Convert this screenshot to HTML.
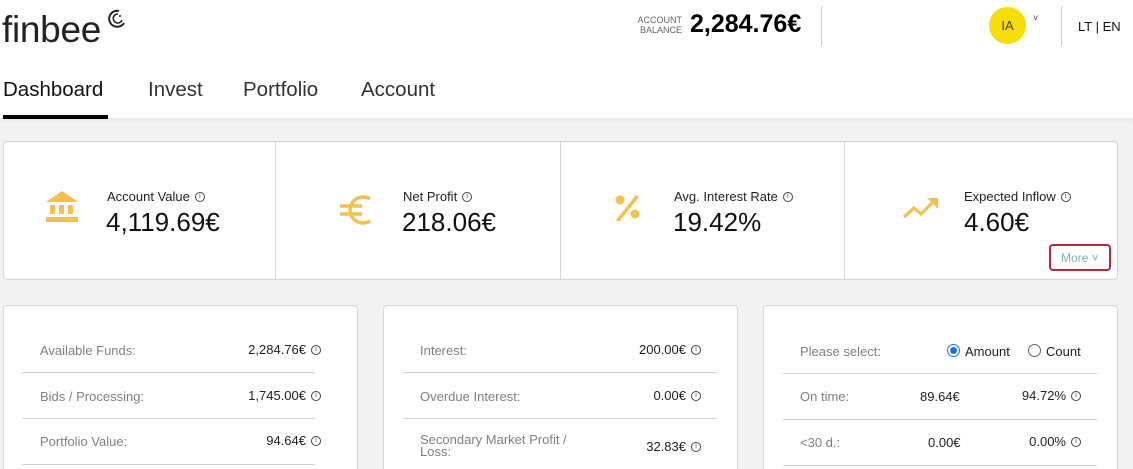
<!DOCTYPE html>
<html><head><meta charset="utf-8"><style>
*{margin:0;padding:0;box-sizing:border-box}
html,body{width:1133px;height:469px;overflow:hidden}
body{background:#f2f2f2;font-family:"Liberation Sans",sans-serif;position:relative;color:#111}
.a{position:absolute;white-space:nowrap}
.hdr{position:absolute;left:0;top:0;width:1133px;height:118px;background:#fff;box-shadow:0 2px 4px rgba(0,0,0,.06)}
.card{position:absolute;background:#fff;border:1px solid #d6d6d6;border-radius:4px}
.lbl{font-size:13px;color:#808080}
.val{font-size:13px;color:#222}
.line{position:absolute;height:1px;background:#d2d2d2}
.i{display:inline-block;width:10px;height:10px;border:1px solid #444;border-radius:50%;font-size:7px;line-height:8px;text-align:center;vertical-align:3px;margin-left:5px;color:#444}
.sl{font-size:13px;color:#222}
.big{font-size:26px;color:#111}
</style></head><body>
<div class="hdr"></div>
<div class="a" style="left:2px;top:9px;font-size:37px;color:#222;letter-spacing:-0.3px">finbee</div>
<svg class="a" style="left:105px;top:8px" width="22" height="22" viewBox="0 0 22 22"><path d="M14 3 A8 8 0 1 0 19 15" fill="none" stroke="#222" stroke-width="2"/><path d="M13 6 A4.5 4.5 0 1 0 17 12" fill="none" stroke="#222" stroke-width="1.6"/><circle cx="15" cy="8" r="1" fill="#222"/></svg>
<div class="a" style="left:3px;top:78px;font-size:20.5px;color:#111">Dashboard</div>
<div class="a" style="left:148px;top:78px;font-size:20.5px;color:#333">Invest</div>
<div class="a" style="left:243px;top:78px;font-size:20.5px;color:#333">Portfolio</div>
<div class="a" style="left:361px;top:78px;font-size:20.5px;color:#333">Account</div>
<div class="a" style="left:3px;top:115px;width:105px;height:4px;background:#000"></div>
<div class="a" style="left:632px;top:15px;font-size:9px;color:#666;line-height:10px;text-align:right;width:50px">ACCOUNT<br>BALANCE</div>
<div class="a" style="left:690px;top:10px;font-size:25px;font-weight:bold;color:#000;letter-spacing:0px">2,284.76€</div>
<div class="a" style="left:821px;top:6px;width:1px;height:40px;background:#ccc"></div>
<div class="a" style="left:989px;top:7px;width:37px;height:37px;border-radius:50%;background:#f7dd0a;font-size:13px;color:#444;text-align:center;line-height:37px">IA</div>
<div class="a" style="left:1033px;top:13px;font-size:9px;color:#333">˅</div>
<div class="a" style="left:1061px;top:6px;width:1px;height:40px;background:#ccc"></div>
<div class="a" style="left:1078px;top:19px;font-size:13px;color:#111">LT | EN</div>

<div class="card" style="left:3px;top:141px;width:1115px;height:139px"></div>
<div class="a" style="left:275px;top:142px;width:1px;height:137px;background:#d6d6d6"></div>
<div class="a" style="left:560px;top:142px;width:1px;height:137px;background:#d6d6d6"></div>
<div class="a" style="left:844px;top:142px;width:1px;height:137px;background:#d6d6d6"></div>

<svg class="a" style="left:44px;top:189px" width="36" height="36" viewBox="0 0 36 36" fill="#f2c14e"><path d="M2 13 L18 2 L34 13Z"/><rect x="6" y="16" width="5" height="9"/><rect x="15" y="16" width="5" height="9"/><rect x="24" y="16" width="5" height="9"/><rect x="2" y="28" width="32" height="5"/></svg>
<div class="a" style="left:107px;top:189px;font-size:13px;color:#222">Account Value<span class="i">i</span></div>
<div class="a big" style="left:106px;top:207px">4,119.69€</div>

<svg class="a" style="left:338px;top:192px" width="36" height="36" viewBox="0 0 36 36"><path d="M32 7 A13 13 0 1 0 32 29" fill="none" stroke="#f2c14e" stroke-width="3.5"/><path d="M2 14 H24 M2 22 H24" stroke="#f2c14e" stroke-width="3.5"/></svg>
<div class="a" style="left:403px;top:189px;font-size:13px;color:#222">Net Profit<span class="i">i</span></div>
<div class="a big" style="left:402px;top:207px">218.06€</div>

<svg class="a" style="left:612px;top:192px" width="32" height="32" viewBox="0 0 32 32" fill="#f2c14e"><circle cx="8" cy="8" r="4.5"/><circle cx="23" cy="22" r="4.5"/><path d="M24 3 L27 5 L7 30 L4 28Z"/></svg>
<div class="a" style="left:674px;top:189px;font-size:13px;color:#222">Avg. Interest Rate<span class="i">i</span></div>
<div class="a big" style="left:673px;top:207px">19.42%</div>

<svg class="a" style="left:902px;top:196px" width="38" height="24" viewBox="0 0 38 24"><path d="M2 21 L12 12 L19 18 L31 6" fill="none" stroke="#f2c14e" stroke-width="3.2"/><path d="M25 2 L36 2 L36 13Z" fill="#f2c14e"/></svg>
<div class="a" style="left:964px;top:189px;font-size:13px;color:#222">Expected Inflow<span class="i">i</span></div>
<div class="a big" style="left:964px;top:207px">4.60€</div>
<div class="a" style="left:1049px;top:244px;width:62px;height:27px;border:2px solid #b52a35;border-radius:4px"></div>
<div class="a" style="left:1061px;top:251px;font-size:12px;color:#7fb8a8">More ˅</div>

<div class="card" style="left:3px;top:305px;width:355px;height:180px"></div>
<div class="card" style="left:383px;top:305px;width:355px;height:180px"></div>
<div class="card" style="left:763px;top:305px;width:355px;height:180px"></div>

<div class="line" style="left:22px;top:372px;width:293px"></div>
<div class="line" style="left:22px;top:418px;width:293px"></div>
<div class="line" style="left:22px;top:464px;width:293px"></div>
<div class="a lbl" style="left:40px;top:343px">Available Funds:</div>
<div class="a val" style="right:812px;top:342px">2,284.76€<span class="i">i</span></div>
<div class="a lbl" style="left:40px;top:389px">Bids / Processing:</div>
<div class="a val" style="right:812px;top:388px">1,745.00€<span class="i">i</span></div>
<div class="a lbl" style="left:40px;top:434px">Portfolio Value:</div>
<div class="a val" style="right:812px;top:433px">94.64€<span class="i">i</span></div>

<div class="line" style="left:403px;top:372px;width:314px"></div>
<div class="line" style="left:403px;top:418px;width:314px"></div>
<div class="a lbl" style="left:420px;top:343px">Interest:</div>
<div class="a val" style="right:432px;top:342px">200.00€<span class="i">i</span></div>
<div class="a lbl" style="left:420px;top:389px">Overdue Interest:</div>
<div class="a val" style="right:432px;top:388px">0.00€<span class="i">i</span></div>
<div class="a lbl" style="left:420px;top:434px;line-height:12px">Secondary Market Profit /<br>Loss:</div>
<div class="a val" style="right:432px;top:439px">32.83€<span class="i">i</span></div>

<div class="line" style="left:783px;top:373px;width:314px"></div>
<div class="line" style="left:783px;top:419px;width:314px"></div>
<div class="line" style="left:783px;top:465px;width:314px"></div>
<div class="a lbl" style="left:800px;top:344px">Please select:</div>
<div class="a" style="left:947px;top:344px;width:13px;height:13px;border-radius:50%;border:1px solid #1a73e8;background:#fff"><div style="margin:2px;width:7px;height:7px;border-radius:50%;background:#1a73e8"></div></div>
<div class="a sl" style="left:965px;top:344px">Amount</div>
<div class="a" style="left:1028px;top:344px;width:13px;height:13px;border-radius:50%;border:1px solid #666"></div>
<div class="a sl" style="left:1046px;top:344px">Count</div>
<div class="a lbl" style="left:800px;top:389px">On time:</div>
<div class="a val" style="left:920px;top:389px">89.64€</div>
<div class="a val" style="right:52px;top:388px">94.72%<span class="i">i</span></div>
<div class="a lbl" style="left:800px;top:435px">&lt;30 d.:</div>
<div class="a val" style="left:928px;top:435px">0.00€</div>
<div class="a val" style="right:52px;top:434px">0.00%<span class="i">i</span></div>
</body></html>
